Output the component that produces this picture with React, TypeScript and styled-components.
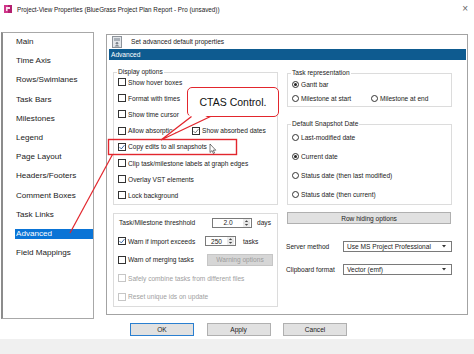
import React from 'react';
import styled, { createGlobalStyle } from 'styled-components';

const Global = createGlobalStyle`
  html, body { margin: 0; padding: 0; background: #fff; }
  body { font-family: "Liberation Sans", Arial, sans-serif; color: #1e1e1e; }
  * { box-sizing: border-box; }
`;

const Window = styled.div`
  position: relative;
  width: 474px;
  height: 354px;
  display: flex;
  flex-direction: column;
  background: #fff;
  overflow: hidden;
`;

const TitleBar = styled.div`
  height: 18px;
  flex: none;
  display: flex;
  align-items: center;
  gap: 5px;
  padding: 0 6px 0 4px;
  font-size: 6.3px;
  color: #222;
`;
const TitleText = styled.span`
  flex: 1;
  white-space: nowrap;
`;
const Close = styled.span`
  font-size: 10px;
  line-height: 10px;
  color: #666;
`;

const Body = styled.div`
  display: flex;
  align-items: flex-start;
  gap: 12px;
  margin-top: 14px;
  padding-left: 1px;
  flex: none;
`;

const Nav = styled.div`
  width: 93px;
  height: 287px;
  border: 1px solid #a8a8a8;
  border-left: 2px solid #8c8c8c;
  padding: 4px 0 0 12px;
  display: flex;
  flex-direction: column;
`;
const NavItem = styled.div<{ $active?: boolean }>`
  height: 10px;
  line-height: 10px;
  margin-bottom: 9.2px;
  padding-left: 1px;
  font-size: 8.1px;
  white-space: nowrap;
  color: ${p => (p.$active ? '#fff' : '#1a1a1a')};
  background: ${p => (p.$active ? '#0a74d6' : 'transparent')};
`;

const Panel = styled.div`
  margin-top: 2px;
  width: 362px;
  height: 281px;
  border: 1px solid #a3a3a3;
  display: flex;
  flex-direction: column;
`;
const PanelHeader = styled.div`
  height: 13px;
  display: flex;
  align-items: center;
  gap: 9px;
  padding-left: 5px;
  font-size: 6.6px;
  color: #222;
`;
const BlueBar = styled.div`
  height: 11px;
  margin: 1px 1px 0 2px;
  background: #0e5b90;
  color: #fff;
  font-size: 6.6px;
  line-height: 11px;
  padding-left: 2px;
`;
const Content = styled.div`
  display: grid;
  grid-template-columns: 165px 165px;
  column-gap: 9px;
  align-items: start;
  padding: 8px 0 0 6px;
`;
const Column = styled.div<{ $top?: number }>`
  display: flex;
  flex-direction: column;
  margin-top: ${p => p.$top ?? 0}px;
`;

const Group = styled.fieldset<{ $top?: number; $bottom?: number }>`
  margin: ${p => p.$top ?? 0}px 0 0 0;
  padding: 0 4px ${p => p.$bottom ?? 0}px 4px;
  border: 1px solid #dcdcdc;
  min-width: 0;
`;
const Legend = styled.legend`
  font-size: 6.6px;
  line-height: 8px;
  padding: 0 1px;
  margin-left: -1px;
  color: #222;
`;
const Rows = styled.div<{ $shift?: number }>`
  display: flex;
  flex-direction: column;
  margin-top: ${p => p.$shift ?? 0}px;
`;
const Row = styled.div<{ $h: number }>`
  height: ${p => p.$h}px;
  display: flex;
  align-items: center;
  font-size: 6.6px;
  white-space: nowrap;
`;
const Item = styled.label<{ $w?: number; $muted?: boolean }>`
  display: flex;
  align-items: center;
  gap: 2px;
  flex: none;
  width: ${p => (p.$w ? `${p.$w}px` : 'auto')};
  color: ${p => (p.$muted ? '#a0a0a0' : '#222')};
`;
const Plain = styled.span<{ $w?: number; $ml?: number }>`
  flex: none;
  width: ${p => (p.$w ? `${p.$w}px` : 'auto')};
  margin-left: ${p => p.$ml ?? 0}px;
  color: #222;
`;

const Box = styled.span<{ $muted?: boolean }>`
  width: 8px;
  height: 8px;
  flex: none;
  border: 1px solid ${p => (p.$muted ? '#c6c6c6' : '#333')};
  background: #fff;
  display: inline-flex;
  align-items: center;
  justify-content: center;
`;
const RadioCircle = styled.span<{ $on?: boolean }>`
  width: 7px;
  height: 7px;
  flex: none;
  border-radius: 50%;
  border: 1px solid #333;
  background: #fff;
  display: inline-flex;
  align-items: center;
  justify-content: center;
  &::after {
    content: '';
    width: 3px;
    height: 3px;
    border-radius: 50%;
    background: #222;
    display: ${p => (p.$on ? 'block' : 'none')};
  }
`;

const Spin = styled.div<{ $w: number; $ml?: number }>`
  width: ${p => p.$w}px;
  height: 10px;
  margin-left: ${p => p.$ml ?? 0}px;
  border: 1px solid #7a7a7a;
  background: #fff;
  display: flex;
  align-items: center;
  flex: none;
`;
const SpinValue = styled.span`
  flex: 1;
  text-align: center;
  font-size: 6.6px;
  color: #222;
`;
const SpinArrows = styled.span`
  width: 7px;
  height: 8px;
  margin-right: 1px;
  display: flex;
  background: #ececec;
`;

const Button = styled.button<{ $primary?: boolean; $disabled?: boolean; $w?: number; $h?: number }>`
  width: ${p => (p.$w ? `${p.$w}px` : '64px')};
  height: ${p => p.$h ?? 13}px;
  padding: 0;
  flex: none;
  font-family: "Liberation Sans", Arial, sans-serif;
  font-size: 6.6px;
  color: ${p => (p.$disabled ? '#9c9c9c' : '#222')};
  background: ${p => (p.$disabled ? '#d6d6d6' : '#e1e1e1')};
  border: 1px solid ${p => (p.$primary ? '#2a7fd0' : p.$disabled ? '#c6c6c6' : '#b0b0b0')};
`;
const Action = styled(Button)<{ $ml?: number }>`
  margin-left: ${p => p.$ml ?? 0}px;
`;
const WideButton = styled(Button)`
  margin-top: 7px;
`;

const FieldRow = styled.div<{ $top: number }>`
  display: flex;
  align-items: center;
  height: 11px;
  margin-top: ${p => p.$top}px;
  font-size: 6.6px;
  color: #222;
`;
const FieldLabel = styled.span`
  width: 57px;
  flex: none;
  margin-left: -1px;
`;
const Select = styled.div`
  width: 109px;
  height: 11px;
  border: 1px solid #7a7a7a;
  background: #fff;
  display: flex;
  align-items: center;
  justify-content: space-between;
  padding: 0 5px 0 3px;
  font-size: 6.6px;
  color: #222;
`;

const ButtonRow = styled.div`
  display: flex;
  gap: 12.5px;
  margin-top: 4px;
  padding-left: 130px;
  flex: none;
`;
const Footer = styled.div`
  flex: 1;
  margin-top: 3px;
  background: #f0f0f0;
`;

const Overlay = styled.svg`
  position: absolute;
  left: 0;
  top: 0;
  pointer-events: none;
`;
const Callout = styled.div`
  position: absolute;
  left: 187px;
  top: 87px;
  width: 92px;
  height: 30px;
  border: 1.5px solid #e2262d;
  border-radius: 5px;
  background: #fff;
  display: flex;
  align-items: center;
  justify-content: center;
  font-size: 10.5px;
  color: #111;
`;

const Check = ({ checked, muted, soft }: { checked?: boolean; muted?: boolean; soft?: boolean }) => (
  <Box $muted={muted}>
    {checked && (
      <svg width="6" height="6" viewBox="0 0 6 6">
        <path d="M0.5 3.1 L2.3 4.9 L5.5 1.1" fill="none" stroke={soft ? '#6f6f6f' : '#2a5f9e'} strokeWidth="0.9" />
      </svg>
    )}
  </Box>
);

const CheckItem = ({ label, checked, muted, w, soft }: { label: string; checked?: boolean; muted?: boolean; w?: number; soft?: boolean }) => (
  <Item $w={w} $muted={muted}>
    <Check checked={checked} muted={muted} soft={soft} />
    <span>{label}</span>
  </Item>
);

const RadioItem = ({ label, on, w }: { label: string; on?: boolean; w?: number }) => (
  <Item $w={w}>
    <RadioCircle $on={on} />
    <span>{label}</span>
  </Item>
);

const Arrows = () => (
  <SpinArrows>
    <svg width="7" height="8" viewBox="0 0 7 8">
      <path d="M1.8 3 L3.5 1.3 L5.2 3 Z" fill="#444" />
      <path d="M1.8 5 L3.5 6.7 L5.2 5 Z" fill="#444" />
      <line x1="0" y1="4" x2="7" y2="4" stroke="#c8c8c8" strokeWidth="0.5" />
    </svg>
  </SpinArrows>
);

const DropArrow = () => (
  <svg width="4" height="3" viewBox="0 0 4 3">
    <path d="M0 0 L4 0 L2 2.5 Z" fill="#333" />
  </svg>
);

const AppIcon = () => (
  <svg width="8" height="8" viewBox="0 0 8 8">
    <rect x="0" y="0" width="8" height="8" fill="#b3206f" />
    <rect x="0" y="0" width="4" height="8" fill="#d0368a" />
    <path d="M2 2 L6 2 L6 4 L3.5 4 L3.5 6 L2 6 Z" fill="#fbe3ef" />
  </svg>
);

const HeaderIcon = () => (
  <svg width="10" height="12" viewBox="0 0 10 12">
    <rect x="0.5" y="0.5" width="9" height="11" fill="#e3e6ea" stroke="#8d939a" />
    <rect x="2" y="2" width="6" height="3" fill="#a9b0b8" />
    <circle cx="5" cy="7.2" r="1.3" fill="#7d848c" />
    <path d="M2.5 10.5 Q5 7.6 7.5 10.5 Z" fill="#7d848c" />
  </svg>
);

const navItems = [
  'Main', 'Time Axis', 'Rows/Swimlanes', 'Task Bars', 'Milestones', 'Legend',
  'Page Layout', 'Headers/Footers', 'Comment Boxes', 'Task Links', 'Advanced', 'Field Mappings',
];

export default function App() {
  return (
    <>
      <Global />
      <Window>
        <TitleBar>
          <AppIcon />
          <TitleText>Project-View Properties (BlueGrass Project Plan Report - Pro (unsaved))</TitleText>
          <Close>×</Close>
        </TitleBar>

        <Body>
          <Nav>
            {navItems.map(n => (
              <NavItem key={n} $active={n === 'Advanced'}>{n}</NavItem>
            ))}
          </Nav>

          <Panel>
            <PanelHeader>
              <HeaderIcon />
              <span>Set advanced default properties</span>
            </PanelHeader>
            <BlueBar>Advanced</BlueBar>
            <Content>
              <Column>
                <Group>
                  <Legend>Display options</Legend>
                  <Rows $shift={-2}>
                    <Row $h={16.2}><CheckItem label="Show hover boxes" /></Row>
                    <Row $h={16.2}><CheckItem label="Format with times" /></Row>
                    <Row $h={16.2}><CheckItem label="Show time cursor" /></Row>
                    <Row $h={16.2}>
                      <CheckItem label="Allow absorption" w={74} />
                      <CheckItem label="Show absorbed dates" checked soft />
                    </Row>
                    <Row $h={16.2}><CheckItem label="Copy edits to all snapshots" checked /></Row>
                    <Row $h={16.2}><CheckItem label="Clip task/milestone labels at graph edges" /></Row>
                    <Row $h={16.2}><CheckItem label="Overlay VST elements" /></Row>
                    <Row $h={16.2}><CheckItem label="Lock background" /></Row>
                  </Rows>
                </Group>
                <Group $top={8}>
                  <Rows>
                    <Row $h={18.5}>
                      <Plain $w={93} $ml={1}>Task/Milestone threshhold</Plain>
                      <Spin $w={40}><SpinValue>2.0</SpinValue><Arrows /></Spin>
                      <Plain $ml={5}>days</Plain>
                    </Row>
                    <Row $h={18.5}>
                      <CheckItem label="Warn if import exceeds" checked w={87} />
                      <Spin $w={31}><SpinValue>250</SpinValue><Arrows /></Spin>
                      <Plain $ml={7}>tasks</Plain>
                    </Row>
                    <Row $h={18.5}>
                      <CheckItem label="Warn of merging tasks" w={89} />
                      <Button $disabled $w={66} $h={12}>Warning options</Button>
                    </Row>
                    <Row $h={18.5}><CheckItem label="Safely combine tasks from different files" muted /></Row>
                    <Row $h={18.5}><CheckItem label="Reset unique ids on update" muted /></Row>
                  </Rows>
                </Group>
              </Column>

              <Column $top={1}>
                <Group $bottom={1}>
                  <Legend>Task representation</Legend>
                  <Rows>
                    <Row $h={14}><RadioItem label="Gantt bar" on /></Row>
                    <Row $h={14}>
                      <RadioItem label="Milestone at start" w={79} />
                      <RadioItem label="Milestone at end" />
                    </Row>
                  </Rows>
                </Group>
                <Group $top={13}>
                  <Legend>Default Snapshot Date</Legend>
                  <Rows>
                    <Row $h={19}><RadioItem label="Last-modified date" /></Row>
                    <Row $h={19}><RadioItem label="Current date" on /></Row>
                    <Row $h={19}><RadioItem label="Status date (then last modified)" /></Row>
                    <Row $h={19}><RadioItem label="Status date (then current)" /></Row>
                  </Rows>
                </Group>
                <WideButton $w={164} $h={12}>Row hiding options</WideButton>
                <FieldRow $top={17}>
                  <FieldLabel>Server method</FieldLabel>
                  <Select><span>Use MS Project Professional</span><DropArrow /></Select>
                </FieldRow>
                <FieldRow $top={12}>
                  <FieldLabel>Clipboard format</FieldLabel>
                  <Select><span>Vector (emf)</span><DropArrow /></Select>
                </FieldRow>
              </Column>
            </Content>
          </Panel>
        </Body>

        <ButtonRow>
          <Action $primary>OK</Action>
          <Action>Apply</Action>
          <Action>Cancel</Action>
        </ButtonRow>
        <Footer />

        <Callout>CTAS Control.</Callout>
        <Overlay width="474" height="354" viewBox="0 0 474 354">
          <line x1="70" y1="233" x2="112.5" y2="154.5" stroke="#e2262d" strokeWidth="1.2" />
          <rect x="108.5" y="139.5" width="128" height="15" fill="none" stroke="#e2262d" strokeWidth="1.4" />
          <polygon points="191,114 161,140 211,114" fill="#fff" />
          <polyline points="191.5,116.5 161,140 210.5,116.5" fill="none" stroke="#e2262d" strokeWidth="1.3" />
          <path d="M210 144 L210 152.5 L212 150.6 L213.4 153.6 L214.6 153 L213.2 150.2 L215.8 150.2 Z" fill="#fff" stroke="#222" strokeWidth="0.6" />
        </Overlay>
      </Window>
    </>
  );
}
